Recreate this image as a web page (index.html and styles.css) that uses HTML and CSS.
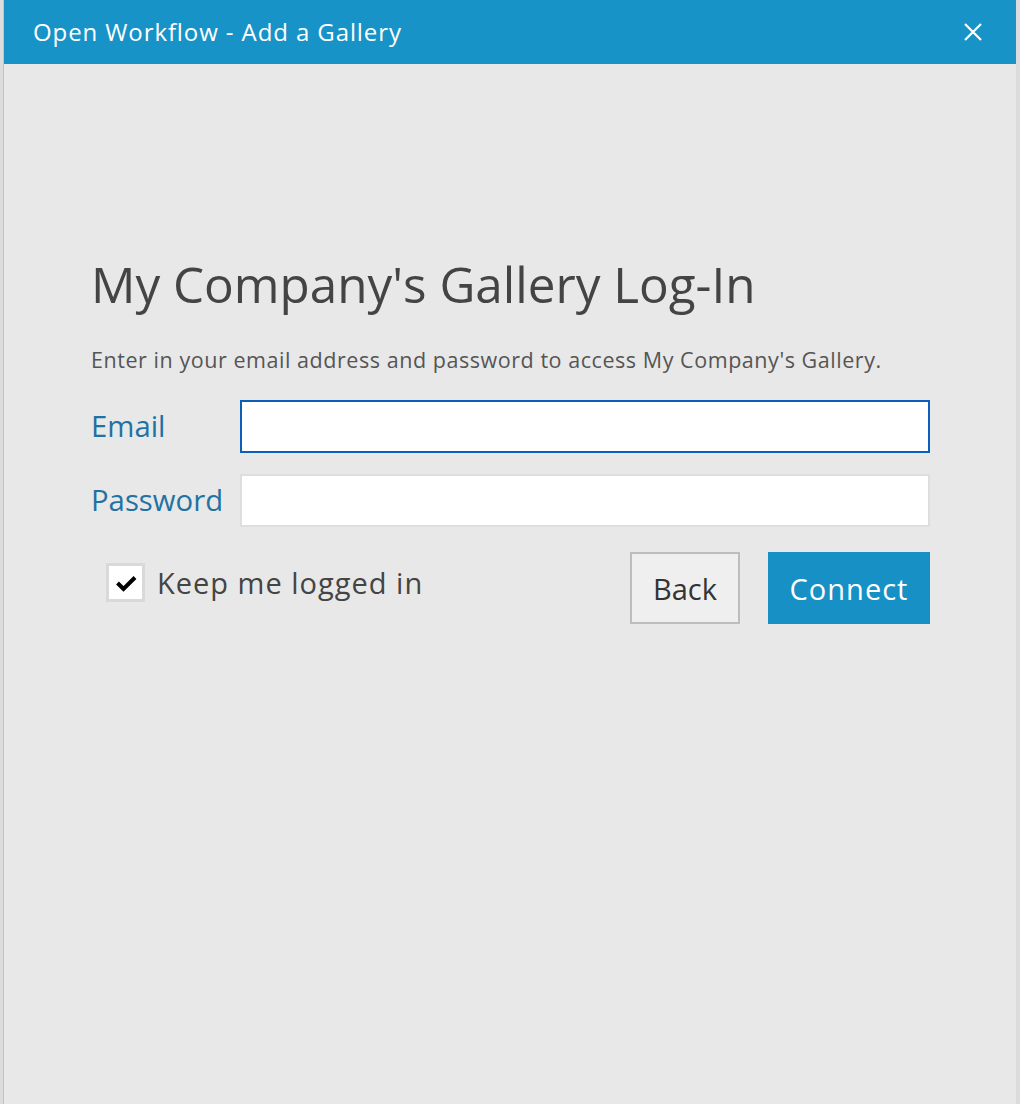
FILE: index.html
```html
<!DOCTYPE html>
<html>
<head>
<meta charset="utf-8">
<link rel="stylesheet" href="styles.css">
</head>
<body>
<div class="window">
  <div class="titlebar">
    <span class="title">Open Workflow - Add a Gallery</span>
    <svg class="close" width="20" height="20" viewBox="0 0 20 20"><path d="M2 2 L18 18 M18 2 L2 18" stroke="#fff" stroke-width="2.2" fill="none"/></svg>
  </div>
  <div class="content">
    <h1 class="heading">My Company's Gallery Log-In</h1>
    <p class="intro">Enter in your email address and password to access My Company's Gallery.</p>
    <div class="form">
      <label class="label">Email</label>
      <div class="input focused"></div>
      <label class="label">Password</label>
      <div class="input"></div>
    </div>
    <div class="actions">
      <div class="keep">
        <span class="checkbox">
          <svg width="24" height="24" viewBox="0 0 24 24"><path d="M3.5 12 L9.5 18 L21 6.5" stroke="#000" stroke-width="4" fill="none" stroke-linejoin="miter"/></svg>
        </span>
        <span class="keep-label">Keep me logged in</span>
      </div>
      <div class="buttons">
        <button class="btn back">Back</button>
        <button class="btn connect">Connect</button>
      </div>
    </div>
  </div>
</div>
</body>
</html>
```
FILE: styles.css
```css
html, body {
  margin: 0;
  padding: 0;
  background: #dcdcdc;
  height: 100%;
}
body {
  font-family: "Open Sans", "Noto Sans", sans-serif;
}
.window {
  margin-left: 3px;
  width: 1013px;
  height: 1104px;
  background: #e8e8e8;
  border-left: 1px solid #c4c4c4;
  box-sizing: border-box;
  display: flex;
  flex-direction: column;
}
.titlebar {
  height: 64px;
  background: #1793c7;
  display: flex;
  align-items: center;
  justify-content: space-between;
  padding: 0 33px 0 29px;
  flex-shrink: 0;
}
.title {
  color: #fff;
  font-size: 24px;
  letter-spacing: 0.9px;
  margin-top: -1px;
}
.close {
  margin-top: -1px;
}
.content {
  padding: 0 86px 0 87px;
}
.heading {
  margin: 192px 0 0 0;
  font-weight: 400;
  font-size: 49.4px;
  line-height: 56px;
  color: #444;
}
.intro {
  margin: 35px 0 0 0;
  font-size: 21.5px;
  letter-spacing: 0.55px;
  line-height: 26px;
  color: #555;
}
.form {
  margin-top: 27px;
  display: grid;
  grid-template-columns: 149px 1fr;
  row-gap: 21px;
  align-items: center;
}
.label {
  font-size: 29.3px;
  color: #1f73a3;
  line-height: 53px;
}
.input {
  height: 53px;
  background: #fff;
  border: 2px solid #dedede;
  box-sizing: border-box;
}
.input.focused {
  border-color: #0b5fb8;
}
.actions {
  margin-top: 25px;
  display: flex;
  justify-content: space-between;
  align-items: center;
}
.keep {
  display: flex;
  align-items: center;
  margin-left: 15px;
  margin-top: -11px;
}
.checkbox {
  width: 39px;
  height: 39px;
  box-sizing: border-box;
  border: 3px solid #d9d9d9;
  background: #fff;
  display: flex;
  align-items: center;
  justify-content: center;
}
.keep-label {
  margin-left: 12px;
  font-size: 29px;
  letter-spacing: 1px;
  color: #444;
}
.buttons {
  display: flex;
  gap: 28px;
}
.btn {
  height: 72px;
  font-family: "Open Sans", "Noto Sans", sans-serif;
  font-size: 29px;
  box-sizing: border-box;
  padding: 0;
}
.back {
  width: 110px;
  background: #efefef;
  border: 2px solid #bdbdbd;
  color: #333;
}
.connect {
  width: 162px;
  background: #1790c6;
  border: none;
  color: #fff;
  letter-spacing: 1px;
}
```
